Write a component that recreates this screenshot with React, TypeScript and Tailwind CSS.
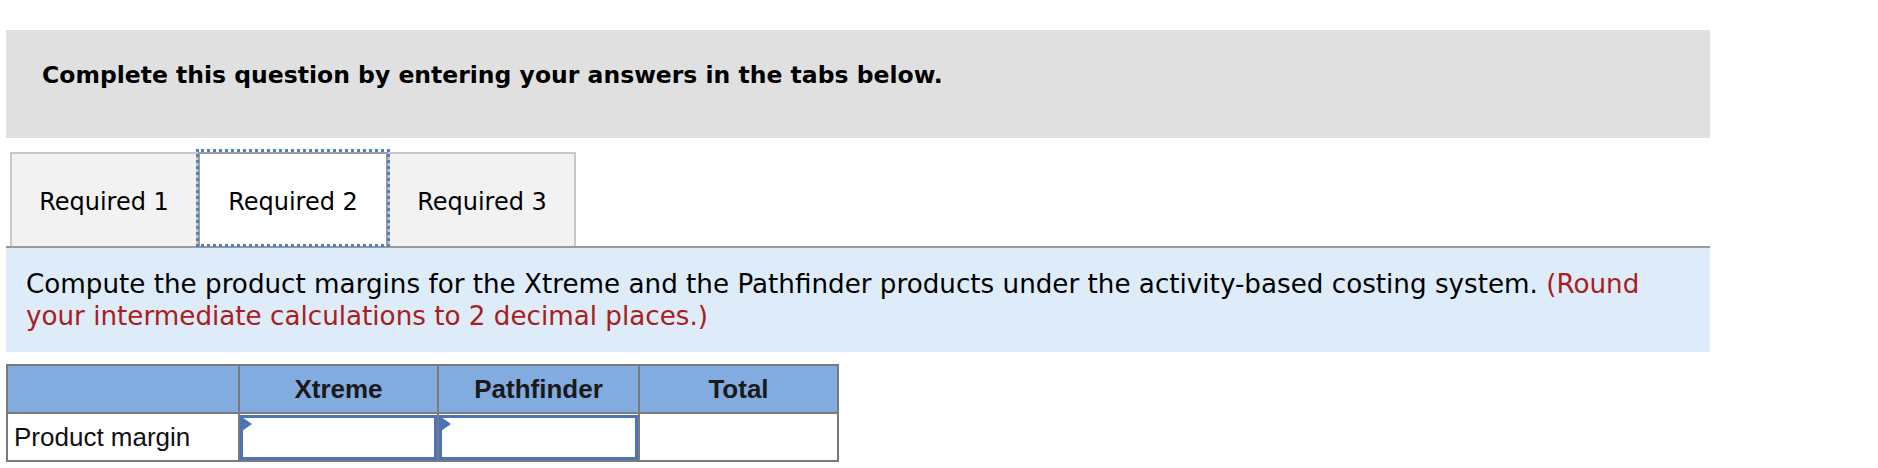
const TABS = ["Required 1", "Required 2", "Required 3"];
const ACTIVE = 1;

function InputCell() {
  return (
    <td className="border-2 border-[#7a7a7a] p-0 bg-white">
      <div className="relative h-[45px] border-[3px] border-[#4a74b6] bg-white">
        <span className="absolute left-[-1px] top-[-1px] w-0 h-0 border-y-[7px] border-y-transparent border-l-[10px] border-l-[#4a74b6]" />
      </div>
    </td>
  );
}

export default function App() {
  return (
    <div className="w-[1878px] h-[468px] bg-white pt-[30px] pl-[6px] font-['DejaVu_Sans',Verdana,sans-serif]">
      <div className="w-[1704px] h-[108px] bg-[#e0e0e0] pl-[36px] pt-[30px]">
        <h2 className="text-[23.5px] leading-[30px] font-bold text-black">
          Complete this question by entering your answers in the tabs below.
        </h2>
      </div>

      <div className="mt-[14px] w-[1704px] border-b-2 border-[#9a9a9a] flex pl-[4px]">
        {TABS.map((t, i) =>
          i === ACTIVE ? (
            <div
              key={t}
              className="relative w-[190px] h-[94px] -mb-[2px] pt-[4px] bg-white border-2 border-b-0 border-[#9c9c9c] flex items-center justify-center text-[24px] text-black"
            >
              <span className="absolute -left-[4px] -right-[4px] -top-[5px] -bottom-[1px] border-[3px] border-dotted border-[#4f7fc9]" />
              {t}
            </div>
          ) : (
            <div
              key={t}
              className="w-[188px] h-[94px] pt-[4px] bg-[#f2f2f2] border-2 border-b-0 border-[#c8c8c8] flex items-center justify-center text-[24px] text-black"
            >
              {t}
            </div>
          )
        )}
      </div>

      <div className="w-[1704px] h-[104px] bg-[#ddecf8] flex items-center pl-[20px] pr-[40px]">
        <p className="text-[26.2px] leading-[32px] text-black">
          Compute the product margins for the Xtreme and the Pathfinder products under the activity-based costing system.{" "}
          <span className="text-[#a8201c]">(Round your intermediate calculations to 2 decimal places.)</span>
        </p>
      </div>

      <table className="mt-[12px] w-[833px] border-collapse font-['Liberation_Sans',Arial,sans-serif] text-[26px]">
        <thead>
          <tr className="h-[48px] bg-[#82abe0]">
            <th className="w-[232px] border-2 border-[#7a7a7a]"></th>
            <th className="w-[199px] border-2 border-[#7a7a7a] font-bold text-[#1a1a1a]">Xtreme</th>
            <th className="w-[201px] border-2 border-[#7a7a7a] font-bold text-[#1a1a1a]">Pathfinder</th>
            <th className="border-2 border-[#7a7a7a] font-bold text-[#1a1a1a]">Total</th>
          </tr>
        </thead>
        <tbody>
          <tr className="h-[48px]">
            <td className="border-2 border-[#7a7a7a] pl-[6px] text-left text-[#111]">Product margin</td>
            <InputCell />
            <InputCell />
            <td className="border-2 border-[#7a7a7a] bg-white"></td>
          </tr>
        </tbody>
      </table>
    </div>
  );
}
